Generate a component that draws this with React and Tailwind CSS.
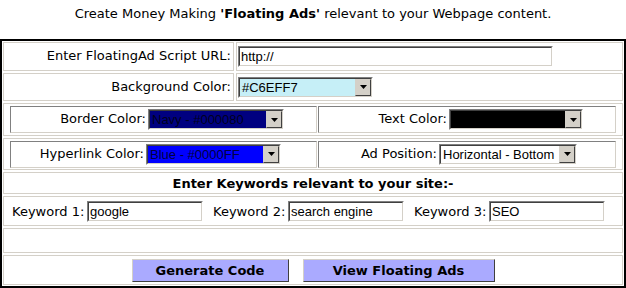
const verdana = "font-['DejaVu_Sans',Verdana,sans-serif]";
const msSans = "font-['Liberation_Sans',Arial,sans-serif]";

const Sunken = ({ className = "", inner = "", children }) => (
  <div className={`border border-t-[#808080] border-l-[#808080] border-b-white border-r-white ${className}`}>
    <div className={`h-full border border-t-[#404040] border-l-[#404040] border-b-[#d4d0c8] border-r-[#d4d0c8] ${inner}`}>
      {children}
    </div>
  </div>
);

const TextBox = ({ value, width }) => (
  <Sunken className={`${width} h-[21px] shrink-0`} inner="bg-white flex items-center px-px">
    <span className={`${msSans} text-[13px] leading-none text-black`}>{value}</span>
  </Sunken>
);

const Select = ({ value, width, bg = "bg-white", color = "text-black" }) => (
  <Sunken className={`${width} h-[21px] shrink-0`} inner={`flex ${bg}`}>
    <div className="flex flex-1 items-center overflow-hidden whitespace-nowrap pl-[2px]">
      <span className={`${msSans} text-[13px] leading-none ${color}`}>{value}</span>
    </div>
    <div className="flex w-[16px] items-center justify-center border border-t-[#d4d0c8] border-l-[#d4d0c8] border-b-[#404040] border-r-[#404040] bg-[#d4d0c8]">
      <svg width="7" height="4" viewBox="0 0 7 4">
        <path d="M0 0h7L3.5 4z" fill="#000" />
      </svg>
    </div>
  </Sunken>
);

const Cell = ({ className = "", children }) => (
  <div className={`border border-[#d4d0c8] ${className}`}>{children}</div>
);

const Label = ({ children, className = "" }) => (
  <span className={`${verdana} text-[13px] leading-none text-black whitespace-nowrap ${className}`}>{children}</span>
);

const Inset = ({ className = "", children }) => (
  <div className={`flex items-center border border-t-[#808080] border-l-[#808080] border-b-[#d4d0c8] border-r-[#d4d0c8] ${className}`}>
    {children}
  </div>
);

const SideLabel = ({ width, children }) => (
  <div className={`flex ${width} items-center justify-end pr-[2px] pb-[2px]`}>
    <Label>{children}</Label>
  </div>
);

const Button = ({ children, width }) => (
  <div className={`${width} h-[23px] flex items-center justify-center border border-t-[#d4d0c8] border-l-[#d4d0c8] border-b-[#404040] border-r-[#404040] bg-[#aaaaff]`}>
    <span className={`${verdana} text-[13px] font-bold leading-none text-black`}>{children}</span>
  </div>
);

export default function App() {
  return (
    <div className="w-[626px] h-[288px] bg-white overflow-hidden">
      <div className="flex h-[39px] justify-center pt-[7px]">
        <p className={`${verdana} text-[13px] leading-none text-black`}>
          Create Money Making <b>'Floating Ads'</b> relevant to your Webpage content.
        </p>
      </div>
      <div className="flex h-[249px] flex-col gap-[2px] border-2 border-black p-px">
        <div className="flex h-[29px] gap-[2px]">
          <Cell className="flex w-[231px] items-center justify-end pr-[2px] pb-[2px]">
            <Label>Enter FloatingAd Script URL:</Label>
          </Cell>
          <Cell className="flex flex-1 items-center pl-px">
            <TextBox value="http://" width="w-[315px]" />
          </Cell>
        </div>
        <div className="flex h-[28px] gap-[2px]">
          <Cell className="flex w-[231px] items-center justify-end pr-[2px] pb-[2px]">
            <Label>Background Color:</Label>
          </Cell>
          <Cell className="flex flex-1 items-center pl-px">
            <Select value="#C6EFF7" width="w-[135px]" bg="bg-[#c6eff7]" />
          </Cell>
        </div>
        <Cell className="flex h-[33px] items-center px-[6px]">
          <div className="flex h-[27px] flex-1 gap-px">
            <Inset className="w-[307px]">
              <SideLabel width="w-[137px]">Border Color:</SideLabel>
              <Select value="Navy - #000080" width="w-[136px]" bg="bg-[#000080]" color="text-[#000020]" />
            </Inset>
            <Inset className="flex-1">
              <SideLabel width="w-[130px]">Text Color:</SideLabel>
              <Select value="" width="w-[134px]" bg="bg-black" />
            </Inset>
          </div>
        </Cell>
        <Cell className="flex h-[32px] items-center px-[6px]">
          <div className="flex h-[27px] flex-1 gap-px">
            <Inset className="w-[307px]">
              <SideLabel width="w-[135px]">Hyperlink Color:</SideLabel>
              <Select value="Blue - #0000FF" width="w-[135px]" bg="bg-[#0000ff]" color="text-[#000040]" />
            </Inset>
            <Inset className="flex-1">
              <SideLabel width="w-[120px]">Ad Position:</SideLabel>
              <Select value="Horizontal - Bottom" width="w-[138px]" />
            </Inset>
          </div>
        </Cell>
        <Cell className="flex h-[22px] items-center justify-center">
          <Label className="font-bold">Enter Keywords relevant to your site:-</Label>
        </Cell>
        <Cell className="flex h-[30px] items-center gap-[10px] pl-[8px]">
          {[
            ["Keyword 1:", "google"],
            ["Keyword 2:", "search engine"],
            ["Keyword 3:", "SEO"],
          ].map(([label, value]) => (
            <div key={label} className="flex w-[191px] items-center justify-between">
              <Label>{label}</Label>
              <TextBox value={value} width="w-[116px]" />
            </div>
          ))}
        </Cell>
        <Cell className="h-[25px]" />
        <Cell className="flex h-[30px] items-center justify-center gap-[14px] pt-px">
          <Button width="w-[157px]">Generate Code</Button>
          <Button width="w-[192px]">View Floating Ads</Button>
        </Cell>
      </div>
    </div>
  );
}
